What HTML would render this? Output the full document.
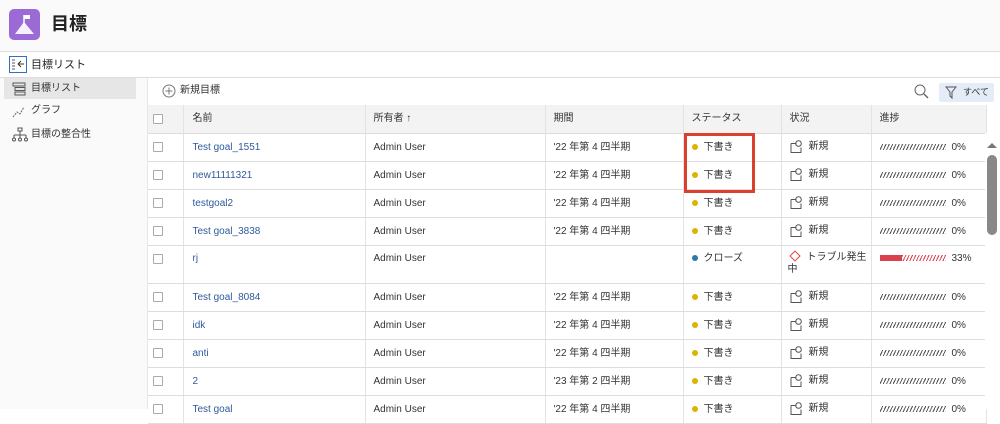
<!DOCTYPE html>
<html><head><meta charset="utf-8"><style>
*{box-sizing:border-box;margin:0;padding:0}
body{width:1000px;height:409px;overflow:hidden;background:#fff;font-family:"Liberation Sans","Noto Sans CJK JP",sans-serif;font-size:10px;color:#333;position:relative}
.abs{position:absolute}
.hdr{left:0;top:0;width:1000px;height:52px;background:#fafafa;border-bottom:1px solid #ddd}
.logo{left:9px;top:9px;width:31px;height:31px;border-radius:5px;background:#9b6ad4}
.title{left:51px;top:12px;font-size:18px;font-weight:bold;color:#222;line-height:24px}
.crumb{left:0;top:52px;width:1000px;height:26px;border-bottom:1px solid #ddd;background:#fff}
.side{left:0;top:78px;width:148px;height:331px;background:#fafafa;border-right:1px solid #e6e6e6}
.si{position:absolute;left:4px;width:132px;height:21px;font-size:10px;padding-left:27px;line-height:21px}
.tool{left:148px;top:78px;width:852px;height:27px}
table{position:absolute;left:148px;top:105px;border-collapse:collapse;table-layout:fixed;width:838px}
td,th{border-bottom:1px solid #ddd;border-right:1px solid #e3e3e3;padding:0 0 0 8px;vertical-align:middle;text-align:left;font-weight:normal;font-size:10px;white-space:nowrap;overflow:hidden;line-height:13px}
th{background:#f3f3f3;height:28px;color:#333}
td{height:28px;color:#333}
td.n{color:#2f5a9c;padding-left:9px}
.cb{display:inline-block;width:10px;height:10px;border:1px solid #aaa;border-radius:1px;background:#fff;vertical-align:middle}
.dot{display:inline-block;width:6px;height:6px;border-radius:50%;background:#d9b400;margin-right:6px;vertical-align:middle}
.bar{display:inline-block;width:66px;height:6px;vertical-align:middle;margin-right:6px;background:repeating-linear-gradient(115deg,#fff 0 2px,#555 2px 3px)}
.ic{display:inline-block;width:12px;height:13px;vertical-align:middle;margin-right:7px}
</style></head><body>
<div class="abs hdr"></div>
<div class="abs logo"><svg width="31" height="31"><path d="M6 25 L15 13 L25 25Z" fill="#fff" opacity=".9"/><path d="M15 6v10" stroke="#fff" stroke-width="1.5"/><path d="M15 6h6v4h-6z" fill="#fff"/></svg></div>
<div class="abs title">目標</div>
<div class="abs crumb"><div class="abs" style="left:9px;top:4px;width:18px;height:17px;border:1px solid #2f6fc7"><svg width="16" height="15"><path d="M2 3h3M2 6h3M2 9h3M2 12h3" stroke="#555"/><path d="M8 7h6M8 7l3-3M8 7l3 3" stroke="#333" fill="none"/></svg></div><div class="abs" style="left:31px;top:6px;font-size:11px;color:#222;line-height:14px">目標リスト</div></div>
<div class="abs side">
<div class="si" style="top:0;background:#e6e6e6"><svg class="abs" style="left:8px;top:4px" width="14" height="14"><rect x="1" y="1" width="12" height="3" fill="none" stroke="#555"/><rect x="3" y="5.5" width="10" height="3" fill="none" stroke="#555"/><rect x="3" y="10" width="10" height="3" fill="none" stroke="#555"/></svg>目標リスト</div>
<div class="si" style="top:22px"><svg class="abs" style="left:8px;top:4px" width="14" height="14"><path d="M1 13l4-5 3 2 4-7" stroke="#666" fill="none" stroke-dasharray="2 1"/></svg>グラフ</div>
<div class="si" style="top:46px"><svg class="abs" style="left:8px;top:3px" width="16" height="15"><rect x="6" y="1" width="4" height="3" fill="none" stroke="#555"/><path d="M8 4v4M2 8h12M2 8v3M8 8v3M14 8v3" stroke="#555" fill="none"/><circle cx="2" cy="12.5" r="1.5" fill="none" stroke="#555"/><circle cx="8" cy="12.5" r="1.5" fill="none" stroke="#555"/><circle cx="14" cy="12.5" r="1.5" fill="none" stroke="#555"/></svg>目標の整合性</div>
</div>
<div class="abs tool">
<svg class="abs" style="left:14px;top:6px" width="14" height="14"><circle cx="7" cy="7" r="6" fill="none" stroke="#777"/><path d="M7 3.5v7M3.5 7h7" stroke="#777"/></svg>
<div class="abs" style="left:32px;top:6px;font-size:10px;line-height:13px">新規目標</div>
<svg class="abs" style="left:766px;top:6px" width="15" height="15"><circle cx="6" cy="6" r="5" fill="none" stroke="#666"/><path d="M10 10l4 4" stroke="#666" stroke-width="1.5"/></svg>
<div class="abs" style="left:791px;top:5px;width:55px;height:19px;background:#e3ecf7;border-radius:2px"><svg class="abs" style="left:6px;top:3px" width="12" height="13"><path d="M1 1h10l-4 5v6l-2-2v-4z" fill="none" stroke="#555"/></svg><span class="abs" style="left:24px;top:3px;font-size:9px;line-height:12px">すべて</span></div>
</div>
<table>
<colgroup><col style="width:35px"><col style="width:182px"><col style="width:180px"><col style="width:138px"><col style="width:98px"><col style="width:90px"><col style="width:115px"></colgroup>
<tr><th style="padding-left:5px"><span class="cb"></span></th><th style="padding-left:9px">名前</th><th>所有者 ↑</th><th>期間</th><th>ステータス</th><th>状況</th><th>進捗</th></tr>
<tr><td style="padding-left:5px"><span class="cb"></span></td><td class="n">Test goal_1551</td><td>Admin User</td><td>'22 年第 4 四半期</td><td><span class="dot"></span>下書き</td><td><svg class="ic"><path d="M1 3.5h5.5M1 3.5v9h10v-5" fill="none" stroke="#555"/><circle cx="8.5" cy="3.5" r="2.8" fill="none" stroke="#555"/></svg>新規</td><td><span class="bar"></span>0%</td></tr>
<tr><td style="padding-left:5px"><span class="cb"></span></td><td class="n">new11111321</td><td>Admin User</td><td>'22 年第 4 四半期</td><td><span class="dot"></span>下書き</td><td><svg class="ic"><path d="M1 3.5h5.5M1 3.5v9h10v-5" fill="none" stroke="#555"/><circle cx="8.5" cy="3.5" r="2.8" fill="none" stroke="#555"/></svg>新規</td><td><span class="bar"></span>0%</td></tr>
<tr><td style="padding-left:5px"><span class="cb"></span></td><td class="n">testgoal2</td><td>Admin User</td><td>'22 年第 4 四半期</td><td><span class="dot"></span>下書き</td><td><svg class="ic"><path d="M1 3.5h5.5M1 3.5v9h10v-5" fill="none" stroke="#555"/><circle cx="8.5" cy="3.5" r="2.8" fill="none" stroke="#555"/></svg>新規</td><td><span class="bar"></span>0%</td></tr>
<tr><td style="padding-left:5px"><span class="cb"></span></td><td class="n">Test goal_3838</td><td>Admin User</td><td>'22 年第 4 四半期</td><td><span class="dot"></span>下書き</td><td><svg class="ic"><path d="M1 3.5h5.5M1 3.5v9h10v-5" fill="none" stroke="#555"/><circle cx="8.5" cy="3.5" r="2.8" fill="none" stroke="#555"/></svg>新規</td><td><span class="bar"></span>0%</td></tr>
<tr><td style="padding-left:5px;height:38px;vertical-align:top;padding-top:7px"><span class="cb"></span></td><td class="n" style="vertical-align:top;padding-top:6px">rj</td><td style="vertical-align:top;padding-top:6px">Admin User</td><td></td><td style="vertical-align:top;padding-top:6px"><span class="dot" style="background:#2a7aa8"></span>クローズ</td><td style="vertical-align:top;padding-top:6px;white-space:normal;line-height:12px;padding-left:6px"><span style="display:inline-block;width:8px;height:8px;border:1px solid #d44;transform:rotate(45deg);margin:0 8px 0 3px"></span>トラブル発生中</td><td style="vertical-align:top;padding-top:6px"><span class="bar" style="background:linear-gradient(90deg,#d9414e 0 22px,transparent 22px),repeating-linear-gradient(115deg,#fff 0 2px,#d9414e 2px 3px)"></span>33%</td></tr>
<tr><td style="padding-left:5px"><span class="cb"></span></td><td class="n">Test goal_8084</td><td>Admin User</td><td>'22 年第 4 四半期</td><td><span class="dot"></span>下書き</td><td><svg class="ic"><path d="M1 3.5h5.5M1 3.5v9h10v-5" fill="none" stroke="#555"/><circle cx="8.5" cy="3.5" r="2.8" fill="none" stroke="#555"/></svg>新規</td><td><span class="bar"></span>0%</td></tr>
<tr><td style="padding-left:5px"><span class="cb"></span></td><td class="n">idk</td><td>Admin User</td><td>'22 年第 4 四半期</td><td><span class="dot"></span>下書き</td><td><svg class="ic"><path d="M1 3.5h5.5M1 3.5v9h10v-5" fill="none" stroke="#555"/><circle cx="8.5" cy="3.5" r="2.8" fill="none" stroke="#555"/></svg>新規</td><td><span class="bar"></span>0%</td></tr>
<tr><td style="padding-left:5px"><span class="cb"></span></td><td class="n">anti</td><td>Admin User</td><td>'22 年第 4 四半期</td><td><span class="dot"></span>下書き</td><td><svg class="ic"><path d="M1 3.5h5.5M1 3.5v9h10v-5" fill="none" stroke="#555"/><circle cx="8.5" cy="3.5" r="2.8" fill="none" stroke="#555"/></svg>新規</td><td><span class="bar"></span>0%</td></tr>
<tr><td style="padding-left:5px"><span class="cb"></span></td><td class="n">2</td><td>Admin User</td><td>'23 年第 2 四半期</td><td><span class="dot"></span>下書き</td><td><svg class="ic"><path d="M1 3.5h5.5M1 3.5v9h10v-5" fill="none" stroke="#555"/><circle cx="8.5" cy="3.5" r="2.8" fill="none" stroke="#555"/></svg>新規</td><td><span class="bar"></span>0%</td></tr>
<tr><td style="padding-left:5px"><span class="cb"></span></td><td class="n">Test goal</td><td>Admin User</td><td>'22 年第 4 四半期</td><td><span class="dot"></span>下書き</td><td><svg class="ic"><path d="M1 3.5h5.5M1 3.5v9h10v-5" fill="none" stroke="#555"/><circle cx="8.5" cy="3.5" r="2.8" fill="none" stroke="#555"/></svg>新規</td><td><span class="bar"></span>0%</td></tr>
</table>
<div class="abs" style="left:684px;top:133px;width:71px;height:60px;border:3px solid #d9412e"></div>
<div class="abs" style="left:985px;top:133px;width:15px;height:276px;background:#fff"></div>
<div class="abs" style="left:987px;top:143px;width:0;height:0;border-left:5px solid transparent;border-right:5px solid transparent;border-bottom:5px solid #777"></div>
<div class="abs" style="left:987px;top:155px;width:10px;height:80px;border-radius:5px;background:#888"></div>
</body></html>
